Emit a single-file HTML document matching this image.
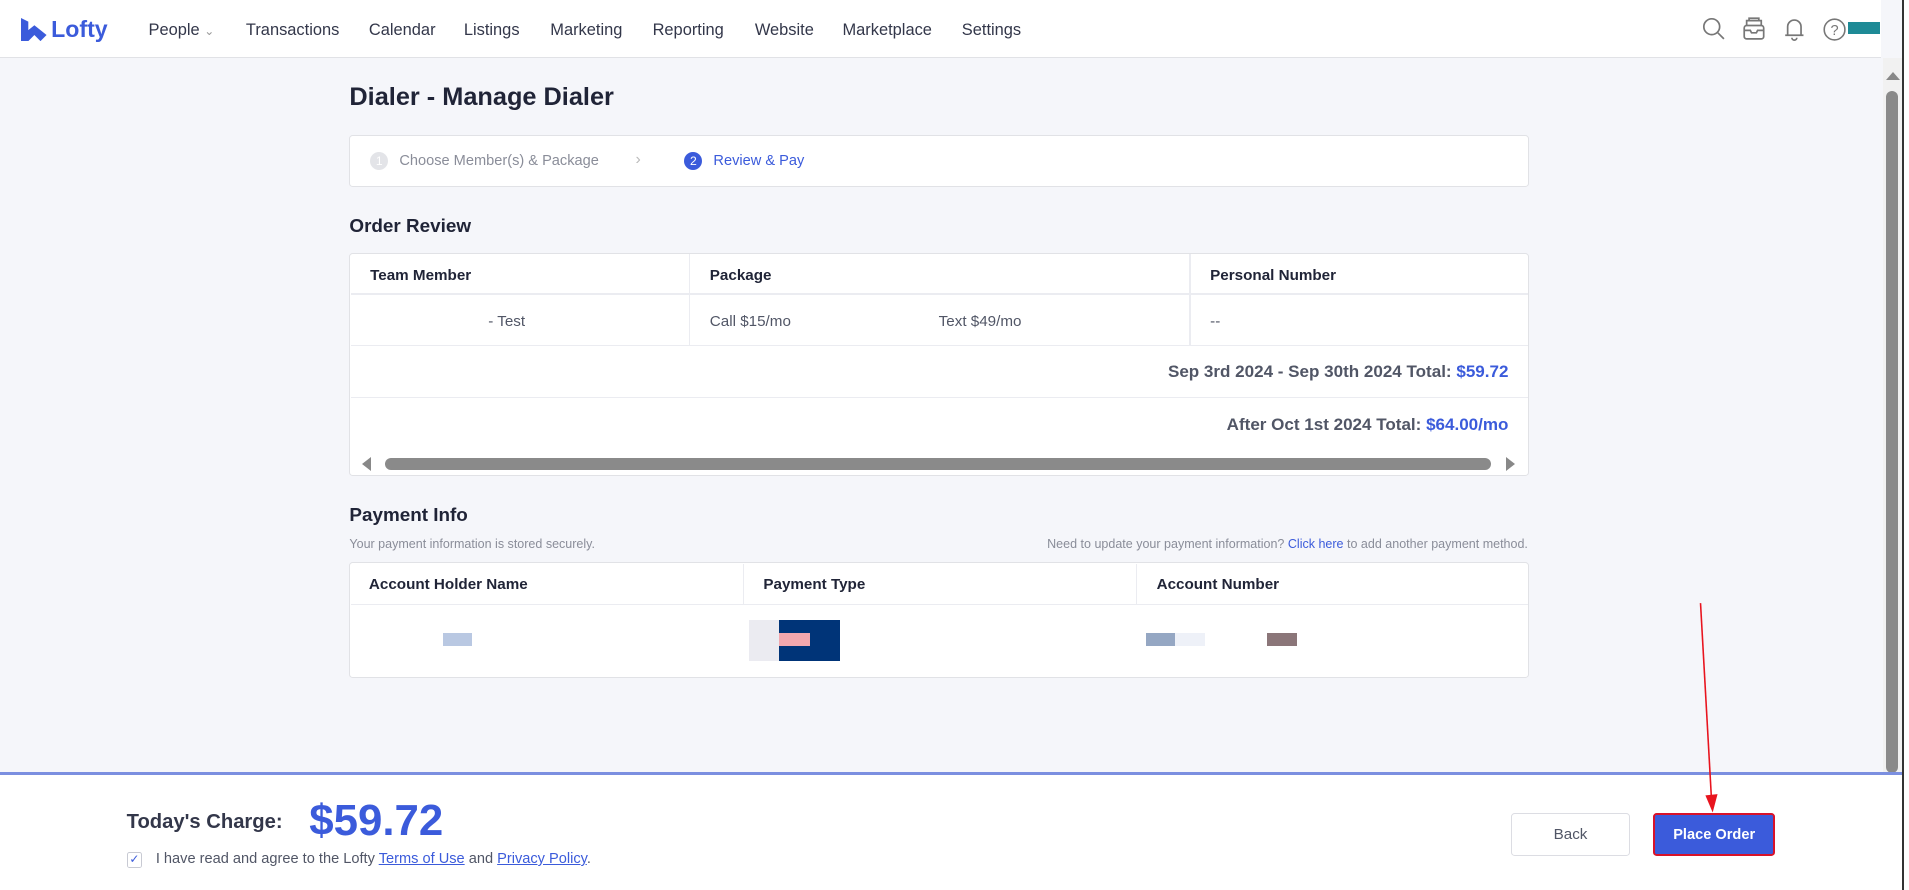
<!DOCTYPE html>
<html><head><meta charset="utf-8"><style>
*{box-sizing:border-box;margin:0;padding:0}
html,body{width:1909px;height:890px;overflow:hidden;background:#f5f6fa}
#w{zoom:1.21747;width:1568px;height:731px;position:relative;font-family:"Liberation Sans",sans-serif;color:#202437;background:#f5f6fa}
.a{position:absolute;white-space:nowrap}
.nav{top:0;left:0;width:1545px;height:48px;background:#fff;border-bottom:1px solid #e1e2e6}
.ni{top:17px;font-size:13.5px;color:#33374a}
.card{background:#fff;border:1px solid #e1e2e6;border-radius:3px}
.th{font-size:12.5px;font-weight:bold;color:#202437}
.td{font-size:12.5px;color:#515666}
.ln{background:#ebecf1}
</style></head><body><div id="w">
<div class="a nav"></div>
<svg class="a" style="left:17px;top:15px" width="22" height="19" viewBox="0 0 22 19"><path d="M0 0 L6 3 V10 L11 6 L21 14 L16 19 L11 14 L6 19 H0 Z" fill="#3b5bdb"/></svg>
<div class="a" style="left:42px;top:13px;font-size:19px;font-weight:bold;color:#3b5bdb">Lofty</div>
<div class="a ni" style="left:122px">People <span style="font-size:10px;color:#999">&#8964;</span></div>
<div class="a ni" style="left:202px">Transactions</div>
<div class="a ni" style="left:303px">Calendar</div>
<div class="a ni" style="left:381px">Listings</div>
<div class="a ni" style="left:452px">Marketing</div>
<div class="a ni" style="left:536px">Reporting</div>
<div class="a ni" style="left:620px">Website</div>
<div class="a ni" style="left:692px">Marketplace</div>
<div class="a ni" style="left:790px">Settings</div>
<svg class="a" style="left:1398px;top:14px" width="20" height="20" viewBox="0 0 20 20" fill="none" stroke="#777" stroke-width="1.4"><circle cx="8" cy="8" r="6.5"/><path d="M13 13 L18 18"/></svg>
<svg class="a" style="left:1432px;top:14px" width="18" height="19" viewBox="0 0 18 19" fill="none" stroke="#777" stroke-width="1.4"><rect x="1" y="7" width="16" height="11" rx="2"/><path d="M3 7 V3 H15 V7 M5 3 V1 H13 V3 M1 11 H6 L7 13 H11 L12 11 H17"/></svg>
<svg class="a" style="left:1465px;top:14px" width="17" height="20" viewBox="0 0 17 20" fill="none" stroke="#777" stroke-width="1.4"><path d="M3 15 V8 A5.5 5.5 0 0 1 14 8 V15 H16 H1 Z M6.5 17 A2 2 0 0 0 10.5 17"/></svg>
<svg class="a" style="left:1497px;top:15px" width="19" height="19" viewBox="0 0 19 19" fill="none" stroke="#777" stroke-width="1.3"><circle cx="9.5" cy="9.5" r="8.5"/><text x="9.5" y="14" text-anchor="middle" font-size="12" fill="#777" stroke="none" font-family="Liberation Sans">?</text></svg>
<div class="a" style="left:1518px;top:18px;width:26px;height:10px;background:#1e8a96"></div>
<div class="a" style="left:1547px;top:48px;width:15px;height:590px;background:#f1f1f1"></div>
<div class="a" style="width:0;height:0;border:6px solid transparent;border-bottom:7px solid #888;border-top:0;left:1549px;top:59px"></div>
<div class="a" style="left:1549px;top:75px;width:10px;height:560px;background:#8a8a8a;border-radius:5px"></div>
<div class="a" style="left:1563px;top:0;width:5px;height:731px;background:#fff"></div>
<div class="a" style="left:1562px;top:0;width:2px;height:731px;background:#333"></div>

<div class="a" style="left:287px;top:68px;font-size:20.8px;font-weight:bold">Dialer - Manage Dialer</div>
<div class="a card" style="left:287px;top:111px;width:969px;height:43px"></div>
<div class="a" style="left:304px;top:125px;width:15px;height:15px;border-radius:50%;background:#e3e4e8;color:#fff;font-size:10px;text-align:center;line-height:15px">1</div>
<div class="a" style="left:328px;top:126px;font-size:12px;color:#8a8d99">Choose Member(s) &amp; Package</div>
<div class="a" style="left:522px;top:124px;font-size:13px;color:#bbb">&#8250;</div>
<div class="a" style="left:562px;top:125px;width:15px;height:15px;border-radius:50%;background:#3b5bdb;color:#fff;font-size:10px;text-align:center;line-height:15px">2</div>
<div class="a" style="left:586px;top:126px;font-size:12px;color:#3b5bdb">Review &amp; Pay</div>

<div class="a" style="left:287px;top:177px;font-size:15.5px;font-weight:bold">Order Review</div>
<div class="a card" style="left:287px;top:208px;width:969px;height:183px"></div>
<div class="a ln" style="left:288px;top:241px;width:967px;height:1px"></div>
<div class="a ln" style="left:288px;top:283px;width:967px;height:1px"></div>
<div class="a ln" style="left:288px;top:326px;width:967px;height:1px"></div>
<div class="a ln" style="left:566px;top:209px;width:1px;height:74px"></div>
<div class="a ln" style="left:977px;top:209px;width:1px;height:74px"></div>
<div class="a th" style="left:304px;top:219px">Team Member</div>
<div class="a th" style="left:583px;top:219px">Package</div>
<div class="a th" style="left:994px;top:219px">Personal Number</div>
<div class="a td" style="left:401px;top:257px">- Test</div>
<div class="a td" style="left:583px;top:257px">Call $15/mo</div>
<div class="a td" style="left:771px;top:257px">Text $49/mo</div>
<div class="a td" style="left:994px;top:257px">--</div>
<div class="a" style="right:329px;top:297px;font-size:14px;font-weight:bold;color:#515666">Sep 3rd 2024 - Sep 30th 2024 Total: <span style="color:#3b5bdb">$59.72</span></div>
<div class="a" style="right:329px;top:341px;font-size:14px;font-weight:bold;color:#515666">After Oct 1st 2024 Total: <span style="color:#3b5bdb">$64.00/mo</span></div>
<div class="a" style="left:297px;top:375px;width:0;height:0;border-top:6px solid transparent;border-bottom:6px solid transparent;border-right:8px solid #888"></div>
<div class="a" style="left:316px;top:376px;width:909px;height:10px;border-radius:5px;background:#8a8a8a"></div>
<div class="a" style="left:1237px;top:375px;width:0;height:0;border-top:6px solid transparent;border-bottom:6px solid transparent;border-left:8px solid #888"></div>

<div class="a" style="left:287px;top:414px;font-size:15.5px;font-weight:bold">Payment Info</div>
<div class="a" style="left:287px;top:441px;font-size:10.3px;color:#8a8d99">Your payment information is stored securely.</div>
<div class="a" style="right:313px;top:441px;font-size:10.3px;color:#8a8d99">Need to update your payment information? <span style="color:#3b5bdb">Click here</span> to add another payment method.</div>
<div class="a card" style="left:287px;top:462px;width:969px;height:95px"></div>
<div class="a ln" style="left:288px;top:496px;width:967px;height:1px"></div>
<div class="a ln" style="left:610px;top:463px;width:1px;height:33px"></div>
<div class="a ln" style="left:933px;top:463px;width:1px;height:33px"></div>
<div class="a th" style="left:303px;top:473px">Account Holder Name</div>
<div class="a th" style="left:627px;top:473px">Payment Type</div>
<div class="a th" style="left:950px;top:473px">Account Number</div>
<div class="a" style="left:364px;top:520px;width:24px;height:11px;background:#b9c8e2"></div>
<div class="a" style="left:615px;top:509px;width:25px;height:34px;background:#ebebf1"></div>
<div class="a" style="left:640px;top:509px;width:50px;height:34px;background:#003478"></div>
<div class="a" style="left:640px;top:520px;width:25px;height:11px;background:#f3a8ae"></div>
<div class="a" style="left:941px;top:520px;width:24px;height:11px;background:#95a7c3"></div>
<div class="a" style="left:965px;top:520px;width:25px;height:11px;background:#eef1f8"></div>
<div class="a" style="left:1041px;top:520px;width:24px;height:11px;background:#8b7679"></div>

<div class="a" style="left:0;top:634px;width:1562px;height:97px;background:#fff;border-top:3px solid #7b8fe0"></div>
<div class="a" style="left:104px;top:666px;font-size:16.6px;font-weight:bold;color:#33374a">Today's Charge:</div>
<div class="a" style="left:254px;top:654px;font-size:36px;font-weight:bold;color:#3b5bdb">$59.72</div>
<div class="a" style="left:104px;top:700px;width:13px;height:13px;border:1px solid #c8cad3;border-radius:2px;color:#3b5bdb;font-size:10px;line-height:11px;text-align:center">&#10003;</div>
<div class="a" style="left:128px;top:699px;font-size:12px;color:#515666">I have read and agree to the Lofty <span style="color:#3b5bdb;text-decoration:underline">Terms of Use</span> and <span style="color:#3b5bdb;text-decoration:underline">Privacy Policy</span>.</div>
<div class="a" style="left:1241px;top:668px;width:98px;height:35px;border:1px solid #dcdde3;border-radius:3px;background:#fff;font-size:12.5px;color:#515666;text-align:center;line-height:35px">Back</div>
<div class="a" style="left:1358px;top:668px;width:100px;height:35px;border:2px solid #d8122a;border-radius:3px;background:#3b5bdb;font-size:12px;color:#fff;text-align:center;line-height:33px;font-weight:bold">Place Order</div>
<svg class="a" style="left:1390px;top:490px" width="25" height="180" viewBox="0 0 25 180"><path d="M7 5 L16 166" stroke="#e8141e" stroke-width="1.3"/><path d="M11 163 L17 177 L21 162 Z" fill="#e8141e"/></svg>
</div></body></html>
